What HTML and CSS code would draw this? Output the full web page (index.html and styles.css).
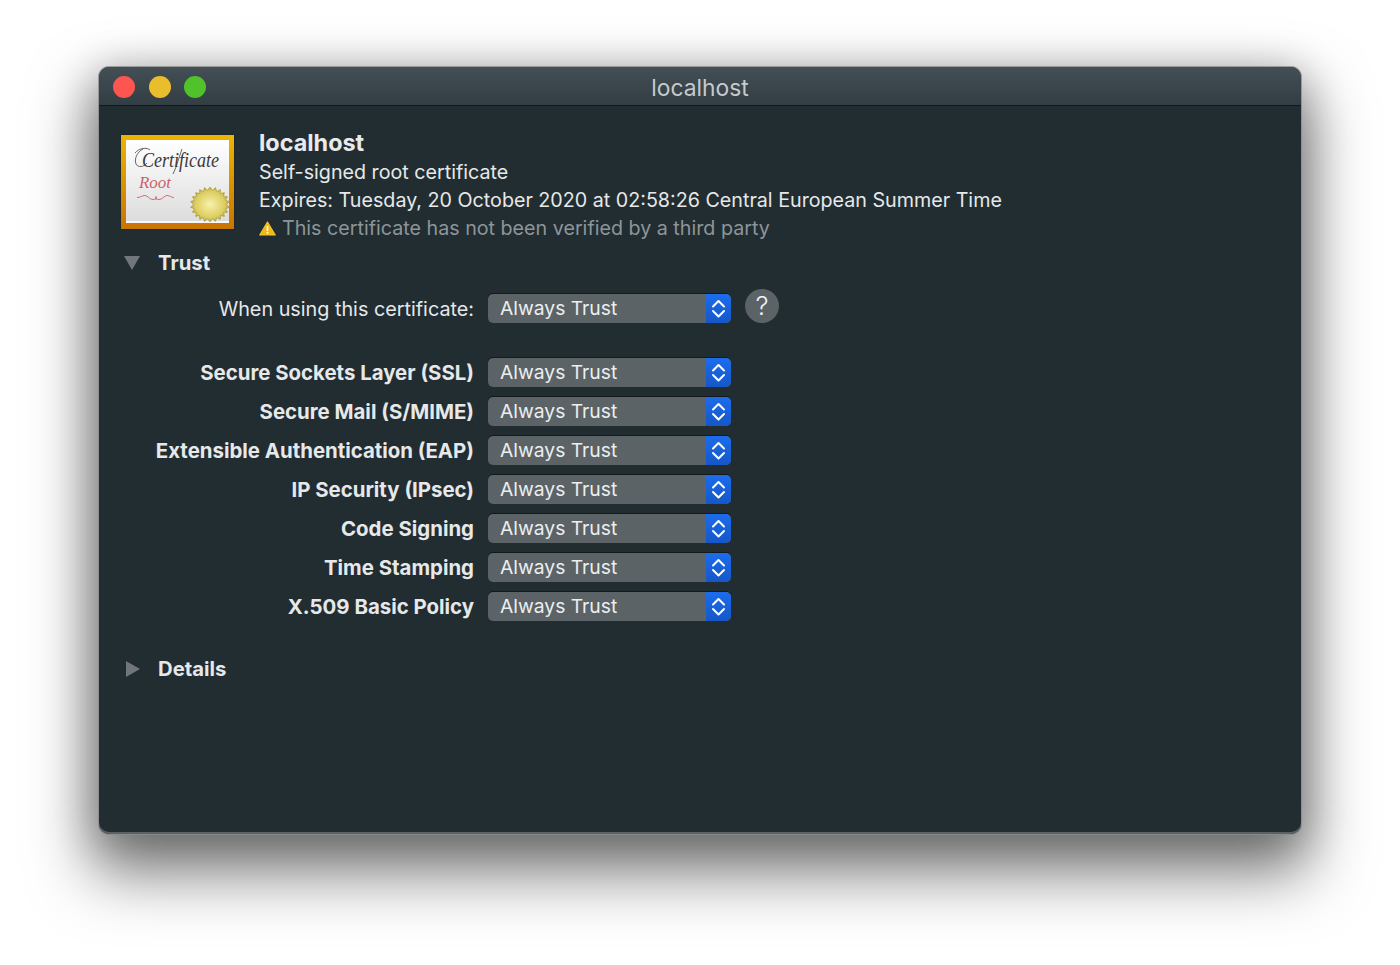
FILE: index.html
```html
<!DOCTYPE html>
<html lang="en">
<head>
<meta charset="utf-8">
<title>localhost</title>
<link rel="stylesheet" href="styles.css">
</head>
<body>
<svg class="defs" width="0" height="0" aria-hidden="true">
  <defs>
    <symbol id="chev" viewBox="0 0 25 29">
      <path d="M7 12.500 12.500 7 18 12.500M7 17 12.500 22.500 18 17" fill="none" stroke="#fff" stroke-width="2" stroke-linecap="round" stroke-linejoin="round"/>
    </symbol>
  </defs>
</svg>
<main class="window">
  <header class="titlebar">
    <div class="lights">
      <span class="light red"></span>
      <span class="light yellow"></span>
      <span class="light green"></span>
    </div>
    <div class="title">localhost</div>
    <div class="spacer"></div>
  </header>
  <div class="content">
    <section class="summary">
      <svg class="cert" viewBox="0 0 113 94" width="113" height="94" role="img" aria-label="Certificate">
        <defs>
          <linearGradient id="frame" x1="0" y1="0" x2="0" y2="1">
            <stop offset="0" stop-color="#edb500"/>
            <stop offset="1" stop-color="#c87400"/>
          </linearGradient>
          <linearGradient id="paper" x1="0" y1="0" x2="0" y2="1">
            <stop offset="0" stop-color="#ffffff"/>
            <stop offset="1" stop-color="#dcdcdc"/>
          </linearGradient>
          <radialGradient id="seal" cx="0.5" cy="0.5" r="0.55">
            <stop offset="0" stop-color="#f8f2ac"/>
            <stop offset=".7" stop-color="#dccc60"/>
            <stop offset="1" stop-color="#ac9620"/>
          </radialGradient>
        </defs>
        <rect width="113" height="94" fill="url(#frame)"/>
        <rect x="5" y="5" width="103" height="83" fill="url(#paper)"/>
        <rect x="5" y="86" width="103" height="2" fill="#f7f7f7"/>
        <path d="M14 18c4-5 12-6 15-3M22 14c-6 3-9 10-7 15 2 4 8 3 11-1M61 14c-3 8-5 17-9 25" fill="none" stroke="#444" stroke-width=".8"/>
        <text x="21" y="32" class="cert-main" textLength="77" lengthAdjust="spacingAndGlyphs">Certificate</text>
        <text x="18" y="53" class="cert-root" textLength="32" lengthAdjust="spacingAndGlyphs">Root</text>
        <path d="M16 62.500c4 0 5-2 8-2 3 0 4 4 8 4 2 0 3-1 3-2 0 1 1 2 3 2 4 0 5-4 8-4 3 0 4 2 7 2M35 61v4" fill="none" stroke="#cf5f6a" stroke-width=".9"/>
        <polygon class="seal" points="89,52 91.500,55.300 94.500,52.600 95.800,56.500 99.300,54.500 99.500,58.500 103.400,57.600 102.600,61.500 106.600,61.700 104.600,65.200 108.400,66.600 105.600,69.500 108.400,72.400 104.600,73.800 106.600,77.300 102.600,77.500 103.400,81.400 99.500,80.500 99.300,84.500 95.800,82.500 94.500,86.400 91.500,83.700 89,87 86.500,83.700 83.500,86.400 82.200,82.500 78.700,84.500 78.500,80.500 74.600,81.400 75.400,77.500 71.400,77.300 73.400,73.800 69.600,72.400 72.400,69.500 69.600,66.600 73.400,65.200 71.400,61.700 75.400,61.500 74.600,57.600 78.500,58.500 78.700,54.500 82.200,56.500 83.500,52.600 86.500,55.300"/>
      </svg>
      <div class="summary-text">
        <h1 class="cert-name">localhost</h1>
        <p class="line">Self-signed root certificate</p>
        <p class="line">Expires: Tuesday, 20 October 2020 at 02:58:26 Central European Summer Time</p>
        <p class="line warn">
          <svg class="warn-icon" viewBox="0 0 17 15" width="17" height="15" aria-hidden="true">
            <path d="M8.500 1 16.200 14H.8z" fill="#f2b90f" stroke="#f5c62a" stroke-width="1.200" stroke-linejoin="round"/>
            <rect x="7.700" y="5" width="1.600" height="5" rx=".6" fill="#fff"/>
            <circle cx="8.500" cy="11.800" r="1" fill="#fff"/>
          </svg>
          <span>This certificate has not been verified by a third party</span>
        </p>
      </div>
    </section>

    <div class="disclosure trust-head">
      <svg class="tri" viewBox="0 0 16 14" width="16" height="14" aria-hidden="true"><path d="M0 0H16L8 14z"/></svg>
      <span>Trust</span>
    </div>

    <div class="when-row">
      <label class="row-label plain">When using this certificate:</label>
      <div class="select"><span class="value">Always Trust</span><span class="stepper"><svg width="25" height="29"><use href="#chev"/></svg></span></div>
      <button class="help" type="button">?</button>
    </div>

    <div class="policy-grid">
      <label class="row-label">Secure Sockets Layer (SSL)</label>
      <div class="select"><span class="value">Always Trust</span><span class="stepper"><svg width="25" height="29"><use href="#chev"/></svg></span></div>
      <label class="row-label">Secure Mail (S/MIME)</label>
      <div class="select"><span class="value">Always Trust</span><span class="stepper"><svg width="25" height="29"><use href="#chev"/></svg></span></div>
      <label class="row-label">Extensible Authentication (EAP)</label>
      <div class="select"><span class="value">Always Trust</span><span class="stepper"><svg width="25" height="29"><use href="#chev"/></svg></span></div>
      <label class="row-label">IP Security (IPsec)</label>
      <div class="select"><span class="value">Always Trust</span><span class="stepper"><svg width="25" height="29"><use href="#chev"/></svg></span></div>
      <label class="row-label">Code Signing</label>
      <div class="select"><span class="value">Always Trust</span><span class="stepper"><svg width="25" height="29"><use href="#chev"/></svg></span></div>
      <label class="row-label">Time Stamping</label>
      <div class="select"><span class="value">Always Trust</span><span class="stepper"><svg width="25" height="29"><use href="#chev"/></svg></span></div>
      <label class="row-label">X.509 Basic Policy</label>
      <div class="select"><span class="value">Always Trust</span><span class="stepper"><svg width="25" height="29"><use href="#chev"/></svg></span></div>
    </div>

    <div class="disclosure details-head">
      <svg class="tri" viewBox="0 0 14 16" width="14" height="16" aria-hidden="true"><path d="M0 0V16L14 8z"/></svg>
      <span>Details</span>
    </div>
  </div>
</main>
</body>
</html>
```
FILE: styles.css
```css
* { box-sizing: border-box; }

html, body { height: 100%; }

body {
  margin: 0;
  background: #fff;
  overflow: hidden;
  padding: 67px 99px 0;
  font-family: Inter, "Noto Sans", sans-serif;
  color: #e6e8e9;
}

.defs { position: absolute; }

.window {
  width: 1202px;
  height: 767px;
  border-radius: 10px;
  background: #222d32;
  overflow: hidden;
  box-shadow:
    0 0 0 1px rgba(140, 140, 140, .8),
    inset 0 -2px 0 #5a6265,
    0 32px 62px 8px rgba(0, 0, 0, .5),
    0 6px 40px 4px rgba(0, 0, 0, .22);
}

.titlebar {
  height: 39px;
  display: grid;
  grid-template-columns: 1fr auto 1fr;
  align-items: center;
  padding: 0 14px;
  background: linear-gradient(#434e55, #333e44);
  border-bottom: 1px solid #12181b;
}

.lights { display: flex; gap: 13.500px; margin-top: 2px; }

.light {
  width: 22px;
  height: 22px;
  border-radius: 50%;
}
.red { background: #fd5550; }
.yellow { background: #e9bd2b; }
.green { background: #50c22c; }

.title {
  padding-top: 3px;
  font-size: 22.800px;
  line-height: 35px;
  color: #c5cacc;
}

.content { padding: 24px 0 0 22px; }

.summary { display: flex; gap: 25px; }

.cert {
  flex: none;
  margin-top: 5px;
  box-shadow: 0 0 1px rgba(0, 0, 0, .6);
}

.cert-main {
  font-family: "Liberation Serif", serif;
  font-style: italic;
  font-size: 21px;
  fill: #3a3a3a;
}
.cert-root {
  font-family: "Liberation Serif", serif;
  font-style: italic;
  font-size: 17px;
  fill: #cf5f6a;
}
.seal {
  fill: url(#seal);
  stroke: #9c8c22;
  stroke-width: .5;
}

.summary-text { display: flex; flex-direction: column; }

.cert-name {
  margin: -1px 0 1px;
  font-size: 23.400px;
  font-weight: 700;
  line-height: 28px;
  color: #e8eaeb;
}

.line {
  margin: 0;
  font-size: 19.700px;
  line-height: 28px;
  color: #e6e8e9;
}

.line.warn {
  display: flex;
  align-items: center;
  gap: 6px;
  color: #8e9598;
}

.warn-icon { flex: none; }

.disclosure {
  display: flex;
  align-items: center;
  font-size: 20.300px;
  font-weight: 700;
  line-height: 28px;
  color: #e6e8e9;
}
.tri { fill: #71767a; flex: none; }

.trust-head { margin-top: 7px; gap: 18px; padding-left: 3px; }
.details-head { margin-top: 34px; gap: 18px; padding-left: 5px; }

.when-row {
  margin-top: 17px;
  display: grid;
  grid-template-columns: 353px 243px auto;
  column-gap: 14px;
  align-items: center;
  justify-content: start;
}

.policy-grid {
  margin-top: 35px;
  display: grid;
  grid-template-columns: 353px 243px;
  column-gap: 14px;
  row-gap: 10px;
  align-items: center;
}

.row-label {
  text-align: right;
  font-size: 20.400px;
  font-weight: 700;
  white-space: nowrap;
  color: #e6e8e9;
}
.row-label.plain { font-size: 19.800px; font-weight: 400; }

.select {
  height: 29px;
  display: flex;
  border-radius: 5px;
  overflow: hidden;
  background: #5b6367;
  box-shadow: 0 -1px 0 #14191c;
}

.value {
  flex: 1;
  padding-left: 12px;
  font-size: 19.300px;
  line-height: 29px;
  color: #eceeef;
}

.stepper {
  width: 25px;
  background: linear-gradient(#1c6cec, #1557c8);
}
.stepper svg { display: block; }

.help {
  width: 34px;
  height: 34px;
  margin-top: -5px;
  padding: 0;
  border: 0;
  border-radius: 50%;
  background: #5b6367;
  color: #f0f1f2;
  font-family: Inter, sans-serif;
  font-size: 26px;
  font-weight: 300;
  line-height: 34px;
}
```
